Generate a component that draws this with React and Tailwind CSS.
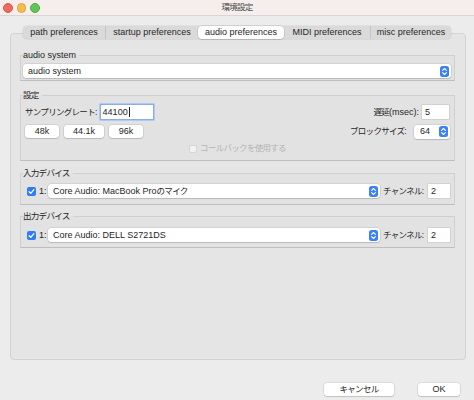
import React from 'react';

const jp = 'text-[8.5px] tracking-[-0.7px]';

const Stepper = () => (
  <svg width="9" height="11" viewBox="0 0 9 11" className="shrink-0">
    <rect width="9" height="11" rx="2.5" fill="#3a82f7" />
    <path
      d="M2.6 4.3 L4.5 2.5 L6.4 4.3 M2.6 6.7 L4.5 8.5 L6.4 6.7"
      stroke="#fff"
      strokeWidth="1.1"
      fill="none"
      strokeLinecap="round"
      strokeLinejoin="round"
    />
  </svg>
);

const Check = ({ disabled }) =>
  disabled ? (
    <span className="inline-block w-[8px] h-[8px] rounded-[2px] bg-[#f2f2f2] border border-[#d6d6d6]" />
  ) : (
    <svg width="9" height="9" viewBox="0 0 9 9" className="shrink-0">
      <rect width="9" height="9" rx="2" fill="#2f7cf6" />
      <path d="M2.1 4.7 L3.8 6.3 L6.9 2.7" stroke="#fff" strokeWidth="1.3" fill="none" strokeLinecap="round" strokeLinejoin="round" />
    </svg>
  );

const Combo = ({ children, className = '' }) => (
  <div
    className={`flex items-center justify-between h-[14px] bg-white rounded-[3px] shadow-[0_0_0_0.5px_rgba(0,0,0,0.14),0_1px_1px_rgba(0,0,0,0.12)] pl-[5px] pr-[2px] ${className}`}
  >
    <span className="truncate">{children}</span>
    <Stepper />
  </div>
);

const Field = ({ value, className = '' }) => (
  <div className={`h-[14px] bg-white pl-[3px] flex items-center shadow-[0_0_0_0.5px_rgba(0,0,0,0.15)] ${className}`}>
    {value}
  </div>
);

const Btn = ({ children, className = '' }) => (
  <div
    className={`h-[13px] bg-white rounded-[3px] flex items-center justify-center shadow-[0_0_0_0.5px_rgba(0,0,0,0.14),0_1px_1px_rgba(0,0,0,0.12)] ${className}`}
  >
    {children}
  </div>
);

const Group = ({ title, className = '', children }) => (
  <fieldset className={`border border-[#d0d0d0] border-b-[#bebebe] bg-[#e2e2e2] px-[2px] ${className}`}>
    <legend className="leading-[11px] pr-[3px]">{title}</legend>
    {children}
  </fieldset>
);

const tabs = [
  { label: 'path preferences', w: 'w-[82px]' },
  { label: 'startup preferences', w: 'w-[93px]' },
  { label: 'audio preferences', w: 'w-[86px]', active: true },
  { label: 'MIDI preferences', w: 'w-[86px]' },
  { label: 'misc preferences', w: 'w-[81px]' },
];

const DeviceRow = ({ name }) => (
  <div className="flex items-center h-[14px] pl-[4px] pr-[2px]">
    <Check />
    <span className="ml-[3px] w-[9px]">1:</span>
    <Combo className="w-[332px]">{name}</Combo>
    <span className={`ml-[3px] ${jp}`}>チャンネル:</span>
    <Field value="2" className="ml-auto w-[22px]" />
  </div>
);

export default function App() {
  return (
    <div
      className="w-[474px] h-[400px] overflow-hidden bg-[#ececec] flex flex-col text-[9px] leading-[11px] text-[#262626]"
      style={{ fontFamily: '"Liberation Sans", "Noto Sans CJK JP", sans-serif' }}
    >
      {/* title bar */}
      <div className="relative h-[16px] shrink-0 bg-[#f5eeec] border-b border-[#dcd5d3] flex items-center justify-center">
        <div className="absolute left-[3px] top-[3px] flex gap-[4px]">
          <span className="w-[9.5px] h-[9.5px] rounded-full bg-[#ee6a5f] border border-[#d9574c]" />
          <span className="w-[9.5px] h-[9.5px] rounded-full bg-[#f5bd4f] border border-[#dea33a]" />
          <span className="w-[9.5px] h-[9.5px] rounded-full bg-[#61c454] border border-[#4ead42]" />
        </div>
        <span className={`text-[#4a4a4a] ${jp}`}>環境設定</span>
      </div>

      {/* tabs */}
      <div className="relative z-10 mt-[10px] flex justify-center">
        <div className="flex h-[13px] rounded-[4px] bg-[#dadada] shadow-[0_0_0_0.5px_rgba(0,0,0,0.1)]">
          {tabs.map((t, i) => {
            const sep = i > 0 && !t.active && !tabs[i - 1].active;
            return (
              <div
                key={t.label}
                className={`${t.w} flex items-center justify-center ${
                  t.active
                    ? 'bg-white rounded-[4px] shadow-[0_0_0_0.5px_rgba(0,0,0,0.15),0_1px_1px_rgba(0,0,0,0.1)]'
                    : ''
                } ${sep ? 'border-l border-[#c4c4c4]' : ''}`}
              >
                {t.label}
              </div>
            );
          })}
        </div>
      </div>

      {/* pane */}
      <div className="-mt-[6px] ml-[10px] mr-[8px] h-[327px] shrink-0 rounded-[4px] bg-[#e5e5e5] border border-[#d3d3d3] pt-[16px] pl-[9px] pr-[10px]">
        <Group title="audio system" className="pt-[3px] pb-[2px] pr-[3px]">
          <Combo>audio system</Combo>
        </Group>

        <Group title={<span className={jp}>設定</span>} className="mt-[9px] pt-[4px] pb-[6px]">
          <div className="flex items-center justify-between h-[14px]">
            <div className="flex items-center">
              <span className={`ml-[2px] ${jp}`}>サンプリングレート:</span>
              <div className="ml-[4px] w-[52px] h-[14px] bg-white flex items-center pl-[2px] shadow-[0_0_0_1.5px_#86aef5]">
                44100<span className="w-px h-[10px] bg-[#222] ml-px" />
              </div>
            </div>
            <div className="flex items-center pr-[3px]">
              <span className={jp}>遅延</span>
              <span>(msec):</span>
              <Field value="5" className="ml-[3px] w-[27px]" />
            </div>
          </div>
          <div className="mt-[6px] flex items-center justify-between h-[13px]">
            <div className="flex gap-[5px] ml-[2px]">
              <Btn className="w-[34px]">48k</Btn>
              <Btn className="w-[40px]">44.1k</Btn>
              <Btn className="w-[34px]">96k</Btn>
            </div>
            <div className="flex items-center pr-[2px]">
              <span className={jp}>ブロックサイズ:</span>
              <div className="ml-[8px] w-[36px] h-[14px] bg-white rounded-[3px] flex items-center justify-between pl-[6px] pr-[2px] shadow-[0_0_0_0.5px_rgba(0,0,0,0.14),0_1px_1px_rgba(0,0,0,0.12)]">
                64
                <Stepper />
              </div>
            </div>
          </div>
          <div className="mt-[5px] flex items-center justify-center gap-[3px] h-[11px] text-[#b4b4b4]">
            <Check disabled />
            <span className={jp}>コールバックを使用する</span>
          </div>
        </Group>

        <Group title={<span className={jp}>入力デバイス</span>} className="mt-[7px] pt-[5px] pb-[6px]">
          <DeviceRow name={<>Core Audio: MacBook Pro<span className={jp}>のマイク</span></>} />
        </Group>

        <Group title={<span className={jp}>出力デバイス</span>} className="mt-[6px] pt-[6px] pb-[5px]">
          <DeviceRow name="Core Audio: DELL S2721DS" />
        </Group>
      </div>

      {/* dialog buttons */}
      <div className="mt-[23px] flex justify-end gap-[24px] pr-[14px]">
        <Btn className="w-[70px]">
          <span className={jp}>キャンセル</span>
        </Btn>
        <Btn className="w-[42px]">OK</Btn>
      </div>
    </div>
  );
}
